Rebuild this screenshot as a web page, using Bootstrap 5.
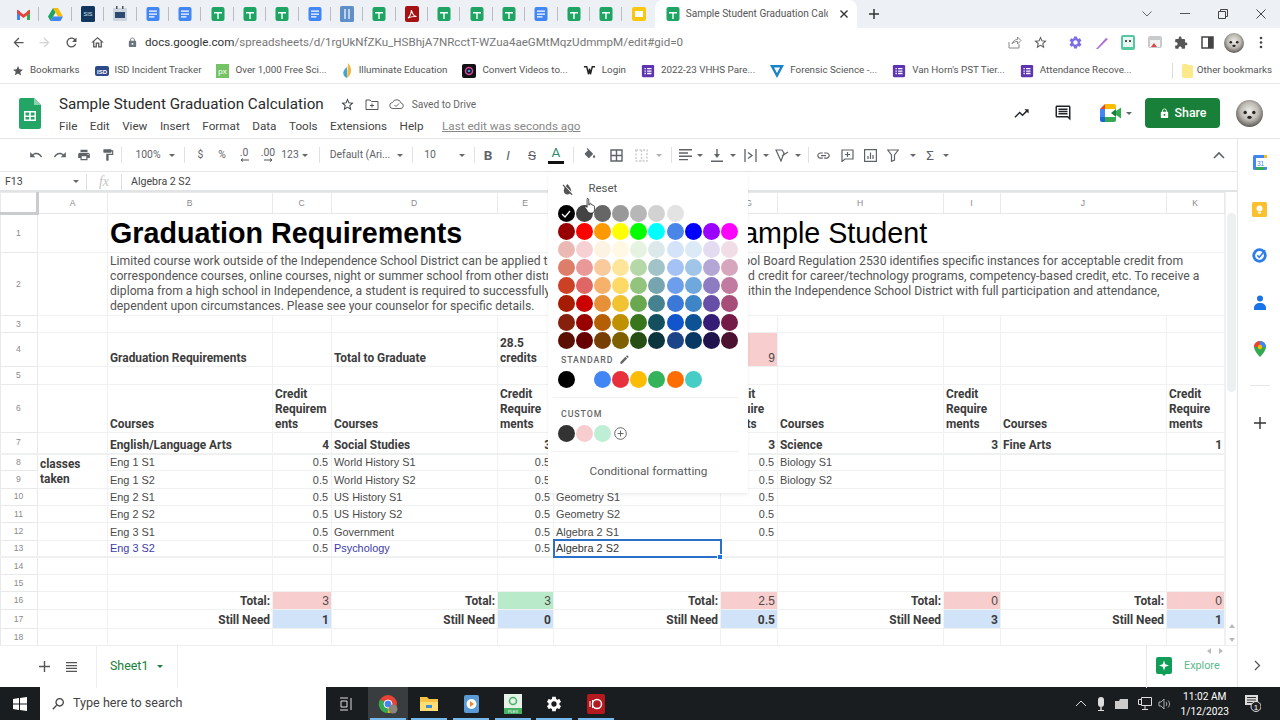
<!DOCTYPE html>
<html lang="en">
<head>
  <meta charset="UTF-8" />
  <title>Sample Student Graduation Calculation</title>
  <link href="https://cdn.jsdelivr.net/npm/bootstrap@5.3.2/dist/css/bootstrap.min.css" rel="stylesheet" />
  <style>
    html, body { width: 1280px; height: 720px; overflow: hidden; }
    body { font-family: Roboto, "Liberation Sans", sans-serif; color: #3c4043; background: #fff; }
    .app { width: 1280px; height: 720px; }
    svg { display: block; flex-shrink: 0; }
    .ic { fill: currentColor; }
    .ml10 { margin-left: 10px; }

    /* chrome */
    .tabstrip { height: 28px; background: #edf1f5; padding-left: 7px; }
    .fav { width: 32.4px; height: 28px; position: relative; }
    .fav::after { content: ""; position: absolute; right: 0; top: 7px; height: 14px; width: 1px; background: #b9bdc1; }
    .fav.last::after { display: none; }
    .tabon { width: 202px; height: 28px; background: #fff; border-radius: 8px 8px 0 0; padding: 0 8px 0 10px; font-size: 10.1px; color: #555; }
    .tabon .tname { width: 142px; margin-left: 5px; overflow: hidden; white-space: nowrap; }
    .tabplus { margin-left: 11px; }
    .winbtn { width: 38px; height: 28px; color: #444; }
    .addr { height: 30px; padding-left: 5px; }
    .i26 { width: 26.5px; height: 26px; color: #555; }
    .addr-end { padding-right: 6px; }
    .url { font-size: 11.6px; color: #777; margin-left: 7px; white-space: nowrap; }
    .url b { font-weight: 400; color: #333; }
    .marks { height: 27px; font-size: 9.8px; color: #555; padding-left: 12px; border-bottom: 1px solid #e6e8ea; white-space: nowrap; }
    .bmk { gap: 6px; margin-right: 15px; }
    .marksep { width: 1px; height: 16px; background: #ddd; margin-right: 9px; }

    /* docs header */
    .dochead { height: 55px; border-bottom: 1px solid #e4e6e8; padding-left: 19px; padding-top: 4px; }
    .docmain { margin-left: 18px; margin-top: 4px; }
    .doctitle { font-size: 15.2px; color: #2b2b2b; line-height: 20px; white-space: nowrap; }
    .saved { font-size: 10.2px; color: #666; }
    .menus { font-size: 11.7px; color: #444; gap: 12.5px; margin-top: 4px; white-space: nowrap; }
    .lastedit { color: #888; text-decoration: underline; margin-left: 6px; }
    .meet { margin-left: 28px; }
    .sharebtn { width: 75px; height: 30px; background: #188038; color: #fff; border-radius: 4px; font-size: 12.4px; font-weight: 500; gap: 5px; margin-left: 13px; }
    .dog-lg { margin-left: 16px; margin-right: 17px; }

    /* toolbar */
    .toolbar { height: 33px; padding-left: 24px; border-bottom: 1px solid #e4e6e8; font-size: 10.4px; color: #666; white-space: nowrap; }
    .tb { height: 32px; flex-shrink: 0; color: #5f6368; }
    .tb-sep { position: relative; }
    .tb-sep::after { content: ""; position: absolute; left: 50%; top: 8px; height: 16px; width: 1px; background: #e0e2e4; }
    .t2 { width: 2px; } .t8 { width: 8px; } .t10 { width: 10px; } .t12 { width: 12px; } .t13 { width: 13px; } .t14 { width: 14px; } .t16 { width: 16px; }
    .t18 { width: 18px; } .t19 { width: 19px; } .t21 { width: 21px; } .t22 { width: 22px; } .t24 { width: 24px; }
    .t26 { width: 26px; } .t28 { width: 28px; } .t30 { width: 30px; } .t44 { width: 44px; } .t66 { width: 66px; }
    .tfont { font-size: 13.5px; }
    .tcolor { font-size: 13.5px; line-height: 1; color: #2e8b6d; }
    .caret { width: 0; height: 0; border-left: 3px solid transparent; border-right: 3px solid transparent; border-top: 3.5px solid #666; }
    .abar { width: 16px; height: 3px; background: #111; margin-top: 1px; }
    .decimals { line-height: 10px; }
    .tbup { margin-right: 12px; }
    .formula { height: 20px; font-size: 10.6px; color: #444; border-bottom: 2px solid #e2e3e4; padding-top: 1px; }
    .cellref { width: 82px; padding-left: 5px; padding-right: 3px; }
    .fx { width: 36px; font-family: "Liberation Serif", serif; font-style: italic; font-size: 14px; color: #c4c4c4; text-align: center; border-left: 1px solid #e0e0e0; border-right: 1px solid #e0e0e0; margin-left: 4px; margin-right: 9px; line-height: 16px; }

    /* sheet grid */
    .gridwrap { height: 453px; position: relative; overflow: hidden; }
    .sheetgrid { table-layout: fixed; width: 1224px; border-collapse: collapse; font-family: "Liberation Sans", sans-serif; font-size: 10.9px; color: #4a4a4a; }
    .sheetgrid td, .sheetgrid th { border: 1px solid #f0f1f1; padding: 0 3px 0 2px; line-height: 15px; vertical-align: bottom; overflow: hidden; white-space: nowrap; }
    .sheetgrid th { font-weight: 400; font-size: 8.6px; color: #8a8a8a; text-align: center; vertical-align: middle; background: #fff; border-color: #e8e9e9; }
    .sheetgrid td.lab { font-family: Roboto, sans-serif; font-weight: 700; font-size: 11.9px; color: #3c3c3c; }
    .sheetgrid td.lab.num { padding-right: 2px; }
    .sheetgrid td.num { text-align: right; }
    .sheetgrid td.blue { color: #3c3ca8; }
    .sheetgrid td.sum { background: #f8cdcd; text-align: right; font-size: 12px; padding-right: 2px; }
    .sheetgrid td.ok { background: #b9eaca; text-align: right; font-size: 12px; padding-right: 2px; }
    .sheetgrid td.need { background: #d0e3f9; text-align: right; font-family: Roboto, sans-serif; font-weight: 700; font-size: 12px; color: #3c3c3c; padding-right: 2px; }
    .sheetgrid th.corner { border-right: 3px solid #c9cbcd; border-bottom: 3px solid #c9cbcd; }
    .sheetgrid tr.thick td, .sheetgrid tr.thick th { border-bottom: 2px solid #eff0f0; }
    .r19 { height: 21px; } .r39 { height: 39px; } .r64 { height: 63px; } .r17 { height: 17.3px; } .r35 { height: 34px; } .r50 { height: 48px; } .r20 { height: 21.5px; } .r21 { height: 19.5px; }
    .sheetgrid td.bigt { font-size: 28.7px; line-height: 32px; color: #000; vertical-align: middle; }
    .sheetgrid td.fine { font-family: Roboto, sans-serif; font-size: 12.2px; line-height: 15px; color: #555; vertical-align: top; padding-top: 1px; }
    .ind3 { margin-left: 25px; }
    .sheetgrid td.taken { vertical-align: top; padding-top: 2px; }
    .sheetgrid td.sel { outline: 2px solid #2a70c8; outline-offset: -1px; color: #333; }
    .handle { position: absolute; left: 717px; top: 362px; width: 6px; height: 6px; background: #1a73e8; border: 1px solid #fff; }
    .vtrack { width: 12px; height: 453px; border-left: 1px solid #f0f0f0; position: relative; }
    .vthumb { position: absolute; left: 1px; top: 21px; width: 9px; height: 179px; background: #edeff1; border-radius: 5px; }
    .vstep { position: absolute; left: 3px; width: 0; height: 0; border-left: 3px solid transparent; border-right: 3px solid transparent; }
    .vstep.up { top: 432px; border-bottom: 4px solid #bbb; }
    .vstep.dn { top: 446px; border-top: 4px solid #bbb; }

    /* bottom */
    .sheetbar { height: 42px; border-top: 1px solid #edeeef; background: #fff; position: relative; }
    .sheetadd { width: 96px; color: #666; padding-left: 39px; gap: 8px; }
    .sheettab { width: 82px; height: 42px; border-left: 1px solid #eee; border-right: 1px solid #eee; color: #188038; font-size: 12.4px; padding-left: 13px; gap: 9px; }
    .sheettab .caret { border-top-color: #188038; }
    .explore { width: 91px; height: 42px; border-left: 1px solid #e8e8e8; font-size: 10.8px; color: #5ab98a; padding-left: 9px; gap: 12px; margin-left: auto; }
    .hsteps { position: absolute; right: 14px; top: 2px; gap: 8px; }
    .sidepanel { width: 44px; border-left: 1px solid #e4e6e8; flex-shrink: 0; }
    .sideslot { height: 46.7px; }
    .sidediv { width: 20px; height: 1px; background: #e4e6e8; margin-top: 13px; margin-bottom: 13px; }
    .sidechev { margin-top: auto; margin-bottom: 16px; margin-right: 4px; }
    .taskbar { height: 33px; background: #1a1d20; color: #fff; font-size: 10.2px; }
    .winstart { width: 40px; }
    .searchbox { width: 286px; height: 33px; background: #fff; color: #444; font-size: 12.6px; gap: 7px; padding-left: 10px; }
    .tk { width: 40px; height: 33px; position: relative; margin-right: 1.7px; }
    .tk.on { background: #3a3d40; }
    .tk.run::after { content: ""; position: absolute; left: 2px; right: 2px; bottom: 0; height: 2px; background: #76b9ed; }
    .clock { line-height: 15px; text-align: center; font-size: 10.2px; margin-left: 10px; margin-right: 16px; white-space: nowrap; }
    .tray { gap: 6px; }
    .notif { margin-right: 19px; }

    /* colour popup */
    .colormenu { position: absolute; left: 548px; top: 172px; width: 200px; height: 321px; background: #fff; box-shadow: 0 2px 3px rgba(0,0,0,.07); padding: 7px 0 0 9.5px; color: #555; }
    .reset { height: 20px; font-size: 11.4px; gap: 14px; padding-left: 2px; margin-bottom: 6px; }
    .swatches { display: grid; grid-template-columns: repeat(10, 18.2px); grid-auto-rows: 18.1px; }
    .dot { width: 17px; height: 17px; border-radius: 50%; }
    .dotcheck { color: #fff; }
    .cap { font-size: 8.8px; letter-spacing: .9px; color: #666; font-weight: 500; line-height: 12px; gap: 6px; padding-left: 3.5px; }
    .cap-std { margin-top: 4px; margin-bottom: 5px; }
    .cap-cus { margin-top: 10px; margin-bottom: 5px; }
    .menurule { height: 1px; background: #f1f1f1; width: 186px; margin-left: -5px; }
    .cfmt { font-size: 11.8px; text-align: center; width: 182px; margin-top: 11px; color: #5c5c5c; }
    .handcur { position: absolute; left: 584px; top: 197px; }
  </style>
</head>
<body>
<svg width="0" height="0" class="position-absolute">
  <defs>
    <radialGradient id="dogfur" cx="50%" cy="42%" r="60%"><stop offset="0" stop-color="#efeee9"/><stop offset=".55" stop-color="#bdbab3"/><stop offset="1" stop-color="#55524e"/></radialGradient>
  </defs>
  <symbol id="s-dog" viewBox="0 0 28 28"><circle cx="14" cy="14" r="14" fill="url(#dogfur)"/><circle cx="9.500" cy="13" r="1.800" fill="#2a2522"/><circle cx="18.500" cy="13" r="1.800" fill="#2a2522"/><ellipse cx="14" cy="18" rx="2.300" ry="1.700" fill="#2a2522"/></symbol>
  <symbol id="s-sheet" viewBox="0 0 16 16"><rect x="1.5" y="1" width="13" height="14" rx="2" fill="#1fa463"/><path d="M4 6h8v1.4H8.7V13H7.3V7.4H4z" fill="#fff"/></symbol>
  <symbol id="s-doc" viewBox="0 0 16 16"><rect x="1.5" y="1" width="13" height="14" rx="2" fill="#4285f4"/><path d="M4 4.5h8v1.3H4zM4 7.4h8v1.3H4zM4 10.3h5.5v1.3H4z" fill="#fff"/></symbol>
  <symbol id="s-form" viewBox="0 0 16 16"><rect x="1" y="1" width="14" height="14" rx="1.5" fill="#5e35b1"/><path d="M4 4.5h1.5V6H4zM7 4.5h5V6H7zM4 7.3h1.5v1.5H4zM7 7.3h5v1.5H7zM4 10.1h1.5v1.5H4zM7 10.1h5v1.5H7z" fill="#fff"/></symbol>
  <symbol id="m-undo" viewBox="0 0 24 24"><path d="M12.5 8c-2.65 0-5.05.99-6.9 2.6L2 7v9h9l-3.62-3.62c1.39-1.16 3.16-1.88 5.12-1.88 3.54 0 6.55 2.31 7.6 5.5l2.37-.78C21.08 11.03 17.15 8 12.5 8z"/></symbol>
  <symbol id="m-redo" viewBox="0 0 24 24"><path d="M18.4 10.6C16.55 8.99 14.15 8 11.5 8c-4.65 0-8.58 3.03-9.96 7.22L3.9 16c1.05-3.19 4.05-5.5 7.6-5.5 1.95 0 3.73.72 5.12 1.88L13 16h9V7l-3.6 3.6z"/></symbol>
  <symbol id="m-print" viewBox="0 0 24 24"><path d="M19 8H5c-1.66 0-3 1.34-3 3v6h4v4h12v-4h4v-6c0-1.66-1.34-3-3-3zm-3 11H8v-5h8v5zm3-7c-.55 0-1-.45-1-1s.45-1 1-1 1 .45 1 1-.45 1-1 1zm-1-9H6v4h12V3z"/></symbol>
  <symbol id="m-paint" viewBox="0 0 24 24"><path d="M18 4V3c0-.55-.45-1-1-1H5c-.55 0-1 .45-1 1v4c0 .55.45 1 1 1h12c.55 0 1-.45 1-1V6h1v4H9v11c0 .55.45 1 1 1h2c.55 0 1-.45 1-1v-9h8V4h-3z"/></symbol>
  <symbol id="m-star" viewBox="0 0 24 24"><path d="M22 9.24l-7.19-.62L12 2 9.19 8.63 2 9.24l5.46 4.73L5.82 21 12 17.27 18.18 21l-1.63-7.03L22 9.24zM12 15.4l-3.76 2.27 1-4.28-3.32-2.88 4.38-.38L12 6.1l1.71 4.04 4.38.38-3.32 2.88 1 4.28L12 15.4z"/></symbol>
  <symbol id="m-comment" viewBox="0 0 24 24"><path d="M21.99 4c0-1.1-.89-2-1.99-2H4c-1.1 0-2 .9-2 2v12c0 1.1.9 2 2 2h14l4 4-.01-18zM20 4v13.17L18.83 16H4V4h16zM6 12h12v2H6zm0-3h12v2H6zm0-3h12v2H6z"/></symbol>
  <symbol id="m-lock" viewBox="0 0 24 24"><path d="M18 8h-1V6c0-2.76-2.24-5-5-5S7 3.24 7 6v2H6c-1.1 0-2 .9-2 2v10c0 1.1.9 2 2 2h12c1.1 0 2-.9 2-2V10c0-1.1-.9-2-2-2zm-6 9c-1.1 0-2-.9-2-2s.9-2 2-2 2 .9 2 2-.9 2-2 2zm3.1-9H8.9V6c0-1.71 1.39-3.1 3.1-3.1 1.71 0 3.1 1.39 3.1 3.1v2z"/></symbol>
  <symbol id="m-gear" viewBox="0 0 24 24"><path d="M19.14 12.94c.04-.3.06-.61.06-.94 0-.32-.02-.64-.07-.94l2.03-1.58c.18-.14.23-.41.12-.61l-1.92-3.32c-.12-.22-.37-.29-.59-.22l-2.39.96c-.5-.38-1.03-.7-1.62-.94l-.36-2.54c-.04-.24-.24-.41-.48-.41h-3.84c-.24 0-.43.17-.47.41l-.36 2.54c-.59.24-1.13.57-1.62.94l-2.39-.96c-.22-.08-.47 0-.59.22L2.74 8.87c-.12.21-.08.47.12.61l2.03 1.58c-.05.3-.09.63-.09.94s.02.64.07.94l-2.03 1.58c-.18.14-.23.41-.12.61l1.92 3.32c.12.22.37.29.59.22l2.39-.96c.5.38 1.03.7 1.62.94l.36 2.54c.05.24.24.41.48.41h3.84c.24 0 .44-.17.47-.41l.36-2.54c.59-.24 1.13-.56 1.62-.94l2.39.96c.22.08.47 0 .59-.22l1.92-3.32c.12-.22.07-.47-.12-.61l-2.01-1.58zM12 15.6c-1.98 0-3.6-1.62-3.6-3.6s1.62-3.6 3.6-3.6 3.6 1.62 3.6 3.6-1.62 3.6-3.6 3.6z"/></symbol>
</svg>

<div class="app position-relative d-flex flex-column">

  <!-- tab strip -->
  <div class="tabstrip d-flex align-items-center">
    <div class="fav d-flex align-items-center justify-content-center"><svg width="15" height="12" viewBox="0 0 15 12"><path d="M1 12V2l3 1v9z" fill="#4285f4"/><path d="M14 12V2l-3 1v9z" fill="#34a853"/><path d="M1 1.500l6.500 5 6.500-5V5L7.500 10 1 5z" fill="#ea4335"/></svg></div>
    <div class="fav d-flex align-items-center justify-content-center"><svg width="15" height="13" viewBox="0 0 15 13"><path d="M5 0h5l5 8.500h-5z" fill="#fbbc04"/><path d="M5 0L0 8.500 2.500 13l5-8.500z" fill="#1fa463"/><path d="M2.500 13h10l2.500-4.500H5z" fill="#4285f4"/></svg></div>
    <div class="fav d-flex align-items-center justify-content-center"><svg width="14" height="16" viewBox="0 0 14 16"><rect width="14" height="16" rx="1.500" fill="#12365e"/><text x="7" y="10" font-size="5.500" fill="#dfe6ee" text-anchor="middle" font-family="Liberation Sans">SIS</text></svg></div>
    <div class="fav d-flex align-items-center justify-content-center"><svg width="14" height="16" viewBox="0 0 14 16"><rect y="2" width="14" height="13" rx="1" fill="#cdd5df"/><rect x="2" y="6" width="10" height="6" fill="#2f4a72"/><rect x="3" width="1.500" height="3" fill="#555"/><rect x="9" width="1.500" height="3" fill="#555"/></svg></div>
    <div class="fav d-flex align-items-center justify-content-center"><svg width="16" height="16"><use href="#s-doc"/></svg></div>
    <div class="fav d-flex align-items-center justify-content-center"><svg width="16" height="16"><use href="#s-doc"/></svg></div>
    <div class="fav d-flex align-items-center justify-content-center"><svg width="16" height="16"><use href="#s-sheet"/></svg></div>
    <div class="fav d-flex align-items-center justify-content-center"><svg width="16" height="16"><use href="#s-sheet"/></svg></div>
    <div class="fav d-flex align-items-center justify-content-center"><svg width="16" height="16"><use href="#s-sheet"/></svg></div>
    <div class="fav d-flex align-items-center justify-content-center"><svg width="16" height="16"><use href="#s-doc"/></svg></div>
    <div class="fav d-flex align-items-center justify-content-center"><svg width="14" height="16" viewBox="0 0 14 16"><rect width="14" height="16" rx="1.500" fill="#5f8fc9"/><path d="M5 3v10M9 3v10" stroke="#fff" stroke-width="1.200"/></svg></div>
    <div class="fav d-flex align-items-center justify-content-center"><svg width="16" height="16"><use href="#s-sheet"/></svg></div>
    <div class="fav d-flex align-items-center justify-content-center"><svg width="14" height="16" viewBox="0 0 14 16"><rect width="14" height="16" rx="2" fill="#a61212"/><path d="M3 12c2-1.500 3-4 3.500-8 .6 3.500 2 6 5 6.500-3-.2-6 .2-8.500 1.500z" fill="none" stroke="#fff" stroke-width="1.100"/></svg></div>
    <div class="fav d-flex align-items-center justify-content-center"><svg width="16" height="16"><use href="#s-sheet"/></svg></div>
    <div class="fav d-flex align-items-center justify-content-center"><svg width="16" height="16"><use href="#s-sheet"/></svg></div>
    <div class="fav d-flex align-items-center justify-content-center"><svg width="16" height="16"><use href="#s-sheet"/></svg></div>
    <div class="fav d-flex align-items-center justify-content-center"><svg width="16" height="16"><use href="#s-doc"/></svg></div>
    <div class="fav d-flex align-items-center justify-content-center"><svg width="16" height="16"><use href="#s-sheet"/></svg></div>
    <div class="fav d-flex align-items-center justify-content-center"><svg width="16" height="16"><use href="#s-sheet"/></svg></div>
    <div class="fav last d-flex align-items-center justify-content-center"><svg width="14" height="14" viewBox="0 0 14 14"><rect width="14" height="14" rx="2" fill="#f9c80e"/><rect x="3" y="4" width="8" height="6" fill="#fff"/></svg></div>
    <div class="tabon d-flex align-items-center flex-shrink-0">
      <svg width="16" height="16"><use href="#s-sheet"/></svg>
      <span class="tname">Sample Student Graduation Calc</span>
      <svg class="ms-auto" width="10" height="10" viewBox="0 0 10 10"><path d="M1.500 1.500l7 7M8.500 1.500l-7 7" stroke="#333" stroke-width="1.400"/></svg>
    </div>
    <svg class="tabplus" width="12" height="12" viewBox="0 0 12 12"><path d="M6 1v10M1 6h10" stroke="#333" stroke-width="1.500"/></svg>
    <div class="d-flex ms-auto">
      <div class="winbtn d-flex align-items-center justify-content-center"><svg width="10" height="6" viewBox="0 0 10 6"><path d="M.5.500L5 5 9.500.500" fill="none" stroke="#666"/></svg></div>
      <div class="winbtn d-flex align-items-center justify-content-center"><svg width="10" height="2"><rect width="10" height="1" fill="#555"/></svg></div>
      <div class="winbtn d-flex align-items-center justify-content-center"><svg width="10" height="10" viewBox="0 0 10 10"><path d="M.5 2.500h7v7h-7zM2.500 2.500v-2h7v7h-2" fill="none" stroke="#444"/></svg></div>
      <div class="winbtn d-flex align-items-center justify-content-center"><svg width="10" height="10" viewBox="0 0 10 10"><path d="M.5.500l9 9M9.500.500l-9 9" stroke="#444"/></svg></div>
    </div>
  </div>

  <!-- address bar -->
  <div class="addr d-flex align-items-center">
    <div class="i26 d-flex align-items-center justify-content-center"><svg class="ic" width="15" height="15" viewBox="0 0 24 24"><path d="M20 11H7.830l5.590-5.590L12 4l-8 8 8 8 1.410-1.410L7.830 13H20v-2z"/></svg></div>
    <div class="i26 d-flex align-items-center justify-content-center opacity-25"><svg class="ic" width="15" height="15" viewBox="0 0 24 24"><path d="M12 4l-1.410 1.410L16.170 11H4v2h12.170l-5.580 5.590L12 20l8-8z"/></svg></div>
    <div class="i26 d-flex align-items-center justify-content-center"><svg class="ic" width="15" height="15" viewBox="0 0 24 24"><path d="M17.650 6.350C16.200 4.900 14.210 4 12 4c-4.420 0-7.990 3.580-7.990 8s3.570 8 7.990 8c3.730 0 6.840-2.550 7.730-6h-2.080c-.82 2.330-3.040 4-5.650 4-3.310 0-6-2.690-6-6s2.690-6 6-6c1.660 0 3.140.69 4.220 1.780L13 11h7V4l-2.350 2.350z"/></svg></div>
    <div class="i26 d-flex align-items-center justify-content-center"><svg class="ic" width="15" height="15" viewBox="0 0 24 24"><path d="M12 5.690l5 4.500V18h-2v-6H9v6H7v-7.810l5-4.500M12 3L2 12h3v8h6v-6h2v6h6v-8h3L12 3z"/></svg></div>
    <svg class="ic ms-3 text-secondary" width="11" height="11" viewBox="0 0 24 24"><use href="#m-lock"/></svg>
    <div class="url"><b>docs.google.com</b>/spreadsheets/d/1rgUkNfZKu_HSBhjA7NRcctT-WZua4aeGMtMqzUdmmpM/edit#gid=0</div>
    <div class="addr-end d-flex align-items-center ms-auto">
      <div class="i26 d-flex align-items-center justify-content-center"><svg width="15" height="15" viewBox="0 0 15 15" fill="none" stroke="#888"><path d="M2 7v6h10V9M5 9c1-3 3-4.500 5.500-4.500V2L14 5.500 10.500 9V6.500C8 6.500 6 7.500 5 9z"/></svg></div>
      <div class="i26 d-flex align-items-center justify-content-center"><svg class="ic" width="15" height="15" viewBox="0 0 24 24"><use href="#m-star"/></svg></div>
      <div class="i26 d-flex align-items-center justify-content-center ms-2"><svg width="15" height="15" viewBox="0 0 24 24" fill="#7c6ee6"><use href="#m-gear"/></svg></div>
      <div class="i26 d-flex align-items-center justify-content-center"><svg width="14" height="14" viewBox="0 0 14 14"><path d="M1 13L11 2l2 1L3 13z" fill="#b06ad6"/></svg></div>
      <div class="i26 d-flex align-items-center justify-content-center"><svg width="14" height="15" viewBox="0 0 14 15"><rect width="14" height="15" rx="2" fill="#56c8a0"/><rect x="2" y="2" width="10" height="10" fill="#e9f8f2"/><circle cx="5" cy="6" r="1" fill="#222"/><circle cx="9" cy="6" r="1" fill="#222"/></svg></div>
      <div class="i26 d-flex align-items-center justify-content-center"><svg width="14" height="14" viewBox="0 0 14 14"><rect width="14" height="12" rx="2" fill="#c9cacc"/><rect x="2" y="4" width="10" height="7" fill="#f2f2f2"/><path d="M3 11l3-4 3 4z" fill="#d44"/></svg></div>
      <div class="i26 d-flex align-items-center justify-content-center"><svg class="ic" width="14" height="14" viewBox="0 0 24 24"><path d="M20.500 11H19V7c0-1.100-.9-2-2-2h-4V3.500C13 2.120 11.880 1 10.500 1S8 2.120 8 3.500V5H4c-1.100 0-1.990.9-1.990 2v3.800H3.500c1.490 0 2.700 1.210 2.700 2.700s-1.210 2.700-2.700 2.700H2V20c0 1.100.9 2 2 2h3.800v-1.500c0-1.490 1.210-2.700 2.700-2.700 1.490 0 2.700 1.210 2.700 2.700V22H17c1.100 0 2-.9 2-2v-4h1.500c1.380 0 2.500-1.120 2.500-2.500S21.880 11 20.500 11z"/></svg></div>
      <div class="i26 d-flex align-items-center justify-content-center"><svg width="13" height="13" viewBox="0 0 13 13"><path d="M1 1h11v11H1z" fill="none" stroke="#444" stroke-width="1.500"/><rect x="7" y="1" width="5" height="11" fill="#444"/></svg></div>
      <div class="i26 d-flex align-items-center justify-content-center"><svg width="20" height="20"><use href="#s-dog"/></svg></div>
      <div class="i26 d-flex align-items-center justify-content-center"><svg width="4" height="13" viewBox="0 0 4 13" fill="#444"><circle cx="2" cy="2" r="1.300"/><circle cx="2" cy="6.500" r="1.300"/><circle cx="2" cy="11" r="1.300"/></svg></div>
    </div>
  </div>

  <!-- bookmarks -->
  <div class="marks d-flex align-items-center">
    <div class="bmk d-flex align-items-center"><svg class="ic" width="12" height="12" viewBox="0 0 24 24"><path d="M12 2l2.900 6.600 7.100.7-5.400 4.700 1.600 7L12 17l-6.200 3.500 1.600-7L2 9.300l7.100-.7z"/></svg>Bookmarks</div>
    <div class="bmk d-flex align-items-center"><svg width="14" height="10" viewBox="0 0 14 10"><rect width="14" height="10" rx="2" fill="#2f4a8a"/><text x="7" y="7.500" font-size="6" fill="#fff" text-anchor="middle" font-family="Liberation Sans" font-weight="700">ISD</text></svg>ISD Incident Tracker</div>
    <div class="bmk d-flex align-items-center"><svg width="13" height="14" viewBox="0 0 13 14"><rect width="13" height="14" fill="#74c365"/><text x="6.500" y="10" font-size="8" fill="#fff" text-anchor="middle" font-family="Liberation Sans">px</text></svg>Over 1,000 Free Sci...</div>
    <div class="bmk d-flex align-items-center"><svg width="11" height="15" viewBox="0 0 11 15"><path d="M6 0C9 4 10 7 8 12L5 15z" fill="#f4b63f"/><path d="M5 4C1 7 0 11 3 14l2 1z" fill="#42a5d9"/></svg>Illuminate Education</div>
    <div class="bmk d-flex align-items-center"><svg width="14" height="14" viewBox="0 0 14 14"><rect width="14" height="14" rx="2" fill="#111"/><circle cx="7" cy="7" r="3.500" fill="none" stroke="#d547a8" stroke-width="1.500"/><circle cx="7" cy="7" r="1.300" fill="#35a7e0"/></svg>Convert Videos to...</div>
    <div class="bmk d-flex align-items-center"><svg width="13" height="13" viewBox="0 0 14 14" fill="none" stroke="#222" stroke-width="1.500"><path d="M1 3h3l2 8 1-6 1 6 2-8h3"/></svg>Login</div>
    <div class="bmk d-flex align-items-center"><svg width="14" height="14"><use href="#s-form"/></svg>2022-23 VHHS Pare...</div>
    <div class="bmk d-flex align-items-center"><svg width="14" height="14" viewBox="0 0 14 14"><path d="M0 1h14L7 14z" fill="#1b84c7"/><path d="M4 3.500h6L7 9z" fill="#fff"/></svg>Forensic Science -...</div>
    <div class="bmk d-flex align-items-center"><svg width="14" height="14"><use href="#s-form"/></svg>Van Horn's PST Tier...</div>
    <div class="bmk d-flex align-items-center"><svg width="14" height="14"><use href="#s-form"/></svg>Attendance Recove...</div>
    <div class="marksep ms-auto"></div>
    <div class="d-flex align-items-center gap-1 pe-2"><svg width="11" height="14" viewBox="0 0 11 14"><path d="M0 2a2 2 0 012-2h3l1 1h3a2 2 0 012 2v9a2 2 0 01-2 2H2a2 2 0 01-2-2z" fill="#fbe98a"/></svg>Other bookmarks</div>
  </div>

  <!-- document header -->
  <div class="dochead d-flex align-items-center">
    <svg width="22" height="31" viewBox="0 0 22 31"><path d="M2 0h13l7 7v22a2 2 0 01-2 2H2a2 2 0 01-2-2V2a2 2 0 012-2z" fill="#23a566"/><path d="M15 0l7 7h-7z" fill="#8ed1b1"/><path d="M5 13h12v10H5zM6.500 14.500v3h3.700v-3zm5.300 0v3h3.700v-3zm-5.300 4.600v2.400h3.700v-2.400zm5.300 0v2.400h3.700v-2.400z" fill="#fff" fill-rule="evenodd"/></svg>
    <div class="docmain">
      <div class="d-flex align-items-center">
        <span class="doctitle">Sample Student Graduation Calculation</span>
        <svg class="ic ms-3" width="15" height="15" viewBox="0 0 24 24"><use href="#m-star"/></svg>
        <svg class="ml10" width="14" height="13" viewBox="0 0 14 13" fill="none" stroke="#555"><path d="M1 2h4l1.500 1.500H13v8H1zM7 5.500v4M5 7.500h4"/></svg>
        <svg class="ml10" width="15" height="12" viewBox="0 0 15 12" fill="none" stroke="#666"><path d="M4 10.500a3 3 0 01-.5-6A4.500 4.500 0 0112 5a2.800 2.800 0 010 5.500zM5.500 7l1.500 1.500L10 5.500"/></svg>
        <span class="saved ms-2">Saved to Drive</span>
      </div>
      <div class="menus d-flex">
        <span>File</span><span>Edit</span><span>View</span><span>Insert</span><span>Format</span><span>Data</span><span>Tools</span><span>Extensions</span><span>Help</span>
        <span class="lastedit">Last edit was seconds ago</span>
      </div>
    </div>
    <div class="d-flex align-items-center ms-auto">
      <svg class="ic text-dark" width="17" height="17" viewBox="0 0 24 24"><path d="M16 6l2.290 2.290-4.880 4.880-4-4L2 16.590 3.410 18l6-6 4 4 6.300-6.290L22 12V6z"/></svg>
      <svg class="ic text-dark ms-4" width="18" height="18" viewBox="0 0 24 24"><use href="#m-comment"/></svg>
      <svg class="meet" width="22" height="18" viewBox="0 0 22 18"><path d="M0 5l5-5v5z" fill="#ea4335"/><path d="M0 5h5v8H0z" fill="#4285f4"/><path d="M0 13h5v5H2a2 2 0 01-2-2z" fill="#1967d2"/><path d="M5 0h9a2 2 0 012 2v3H5z" fill="#fbbc04"/><path d="M5 13h11v3a2 2 0 01-2 2H5z" fill="#34a853"/><path d="M11 9l5-4v8z" fill="#188038"/><path d="M16 7l5-3.500v11L16 11z" fill="#34a853"/></svg>
      <div class="caret ms-1"></div>
      <div class="sharebtn d-flex align-items-center justify-content-center">
        <svg class="ic" width="11" height="11" viewBox="0 0 24 24"><use href="#m-lock"/></svg>Share
      </div>
      <svg class="dog-lg" width="27" height="27"><use href="#s-dog"/></svg>
    </div>
  </div>

  <div class="d-flex flex-grow-1">
    <div class="flex-grow-1 d-flex flex-column">

      <!-- toolbar -->
      <div class="toolbar d-flex align-items-center">
        <div class="tb t24 d-flex align-items-center justify-content-center"><svg class="ic" width="14" height="14"><use href="#m-undo"/></svg></div>
        <div class="tb t24 d-flex align-items-center justify-content-center"><svg class="ic" width="14" height="14"><use href="#m-redo"/></svg></div>
        <div class="tb t24 d-flex align-items-center justify-content-center"><svg class="ic" width="14" height="14"><use href="#m-print"/></svg></div>
        <div class="tb t24 d-flex align-items-center justify-content-center"><svg class="ic" width="14" height="14"><use href="#m-paint"/></svg></div>
        <div class="tb tb-sep t2"></div>
        <div class="tb t44 d-flex align-items-center justify-content-center ps-2">100%</div>
        <div class="tb t12 d-flex align-items-center justify-content-center"><div class="caret"></div></div>
        <div class="tb tb-sep t12"></div>
        <div class="tb t21 d-flex align-items-center justify-content-center">$</div>
        <div class="tb t22 d-flex align-items-center justify-content-center">%</div>
        <div class="tb t22 d-flex flex-column align-items-center justify-content-center decimals">.0<svg width="9" height="4" viewBox="0 0 9 4" fill="none" stroke="#555"><path d="M9 2H1M3 .5L1 2l2 1.500"/></svg></div>
        <div class="tb t26 d-flex flex-column align-items-center justify-content-center decimals">.00<svg width="9" height="4" viewBox="0 0 9 4" fill="none" stroke="#555"><path d="M0 2h8M6 .5L8 2 6 3.500"/></svg></div>
        <div class="tb t18 d-flex align-items-center justify-content-center">123</div>
        <div class="tb t12 d-flex align-items-center justify-content-center"><div class="caret"></div></div>
        <div class="tb tb-sep t16"></div>
        <div class="tb t66 d-flex align-items-center justify-content-center">Default (Ari...</div>
        <div class="tb t14 d-flex align-items-center justify-content-center"><div class="caret"></div></div>
        <div class="tb tb-sep t10"></div>
        <div class="tb t26 d-flex align-items-center justify-content-center">10</div>
        <div class="tb t13"></div>
        <div class="tb t12 d-flex align-items-center justify-content-center"><div class="caret"></div></div>
        <div class="tb tb-sep t12"></div>
        <div class="tb t16 d-flex align-items-center justify-content-center fw-bold tfont">B</div>
        <div class="tb t24 d-flex align-items-center justify-content-center fst-italic tfont">I</div>
        <div class="tb t24 d-flex align-items-center justify-content-center text-decoration-line-through tfont">S</div>
        <div class="tb t24 d-flex flex-column align-items-center justify-content-center"><span class="tcolor">A</span><div class="abar"></div></div>
        <div class="tb tb-sep t10"></div>
        <div class="tb t24 d-flex align-items-center justify-content-center"><svg class="ic" width="14" height="14" viewBox="0 0 24 24"><path d="M16.560 8.940L7.620 0 6.210 1.410l2.380 2.380-5.150 5.150c-.59.59-.59 1.540 0 2.120l5.500 5.500c.29.29.68.44 1.060.44s.77-.15 1.060-.44l5.500-5.500c.59-.58.59-1.530 0-2.120zM19 11.500s-2 2.170-2 3.500c0 1.100.9 2 2 2s2-.9 2-2c0-1.330-2-3.500-2-3.500z"/></svg></div>
        <div class="tb t28 d-flex align-items-center justify-content-center"><svg width="13" height="13" viewBox="0 0 13 13" fill="none" stroke="#5f6368" stroke-width="1.400"><path d="M1 1h11v11H1zM6.500 1v11M1 6.500h11"/></svg></div>
        <div class="tb t22 d-flex align-items-center justify-content-center"><svg width="13" height="13" viewBox="0 0 13 13" fill="none" stroke="#c9cbcd" stroke-width="1.400" stroke-dasharray="2 1.500"><path d="M1 1h11v11H1zM6.500 1v11"/></svg></div>
        <div class="tb t14 d-flex align-items-center justify-content-center opacity-50"><div class="caret"></div></div>
        <div class="tb tb-sep t10"></div>
        <div class="tb t18 d-flex align-items-center justify-content-center"><svg width="13" height="12" viewBox="0 0 13 12" fill="#5f6368"><path d="M0 0h13v1.400H0zM0 3.300h9v1.400H0zM0 6.600h13V8H0zM0 9.900h9v1.400H0z"/></svg></div>
        <div class="tb t12 d-flex align-items-center justify-content-center"><div class="caret"></div></div>
        <div class="tb t22 d-flex align-items-center justify-content-center"><svg width="12" height="13" viewBox="0 0 12 13" fill="#5f6368"><path d="M5.300 0h1.400v5H9L6 9 3 5h2.300zM0 11.600h12V13H0z"/></svg></div>
        <div class="tb t10 d-flex align-items-center justify-content-center"><div class="caret"></div></div>
        <div class="tb t24 d-flex align-items-center justify-content-center"><svg width="13" height="13" viewBox="0 0 13 13" fill="none" stroke="#5f6368" stroke-width="1.300"><path d="M1 0v13M12 0v13M4 3.500l4 3-4 3"/></svg></div>
        <div class="tb t8 d-flex align-items-center justify-content-center"><div class="caret"></div></div>
        <div class="tb t24 d-flex align-items-center justify-content-center"><svg width="14" height="13" viewBox="0 0 14 13" fill="none" stroke="#5f6368" stroke-width="1.200"><path d="M1 1h6l2 3-3 8zM7 7l6-4"/></svg></div>
        <div class="tb t8 d-flex align-items-center justify-content-center"><div class="caret"></div></div>
        <div class="tb tb-sep t12"></div>
        <div class="tb t18 d-flex align-items-center justify-content-center"><svg class="ic" width="15" height="15" viewBox="0 0 24 24"><path d="M3.900 12c0-1.710 1.390-3.100 3.100-3.100h4V7H7c-2.760 0-5 2.240-5 5s2.240 5 5 5h4v-1.900H7c-1.710 0-3.100-1.390-3.100-3.100zM8 13h8v-2H8v2zm9-6h-4v1.900h4c1.710 0 3.100 1.390 3.100 3.100s-1.390 3.100-3.100 3.100h-4V17h4c2.760 0 5-2.240 5-5s-2.240-5-5-5z"/></svg></div>
        <div class="tb t30 d-flex align-items-center justify-content-center"><svg width="13" height="13" viewBox="0 0 13 13" fill="none" stroke="#5f6368" stroke-width="1.200"><path d="M1 1h11v9H4l-3 2.500zM6.500 3v5M4 5.500h5"/></svg></div>
        <div class="tb t16 d-flex align-items-center justify-content-center"><svg width="13" height="13" viewBox="0 0 13 13" fill="none" stroke="#5f6368" stroke-width="1.200"><path d="M.6.600h11.800v11.800H.6zM4 10V7M6.500 10V3.500M9 10V6"/></svg></div>
        <div class="tb t30 d-flex align-items-center justify-content-center"><svg width="12" height="13" viewBox="0 0 12 13" fill="none" stroke="#5f6368" stroke-width="1.200"><path d="M.7 1h10.600L7.500 6v5L4.500 12.300V6z"/></svg></div>
        <div class="tb t10 d-flex align-items-center justify-content-center"><div class="caret"></div></div>
        <div class="tb t24 d-flex align-items-center justify-content-center tfont">&Sigma;</div>
        <div class="tb t8 d-flex align-items-center justify-content-center"><div class="caret"></div></div>
        <svg class="ms-auto tbup" width="12" height="8" viewBox="0 0 12 8" fill="none" stroke="#5f6368" stroke-width="1.600"><path d="M1 7l5-5 5 5"/></svg>
      </div>

      <!-- formula bar -->
      <div class="formula d-flex align-items-center">
        <div class="cellref d-flex align-items-center justify-content-between">F13 <div class="caret"></div></div>
        <div class="fx">fx</div>
        <div>Algebra 2 S2</div>
      </div>

      <!-- grid -->
      <div class="d-flex">
        <div class="gridwrap flex-grow-1">
          <table class="sheetgrid">
            <colgroup>
              <col width="37"><col width="70"><col width="165"><col width="59"><col width="166"><col width="56"><col width="167"><col width="57"><col width="166"><col width="57"><col width="166"><col width="58">
            </colgroup>
            <tr class="r19"><th class="corner"></th><th>A</th><th>B</th><th>C</th><th>D</th><th>E</th><th>F</th><th>G</th><th>H</th><th>I</th><th>J</th><th>K</th></tr>
            <tr class="r39"><th>1</th><td></td><td colspan="5" class="bigt fw-bold">Graduation Requirements</td><td colspan="5" class="bigt">Sample Student</td></tr>
            <tr class="r64"><th>2</th><td></td>
              <td colspan="5" class="fine">Limited course work outside of the Independence School District can be applied t<br>correspondence courses, online courses, night or summer school from other distr<br>diploma from a high school in Independence, a student is required to successfully<br>dependent upon circumstances. Please see your counselor for specific details.</td>
              <td colspan="5" class="fine"><div>School Board Regulation 2530 identifies specific instances for acceptable credit from</div><div class="ind3">d credit for career/technology programs, competency-based credit, etc. To receive a</div><div class="ind3">ithin the Independence School District with full participation and attendance,</div></td>
            </tr>
            <tr class="r17"><th>3</th><td></td><td></td><td></td><td></td><td></td><td></td><td></td><td></td><td></td><td></td><td></td></tr>
            <tr class="r35"><th>4</th><td></td><td class="lab">Graduation Requirements</td><td></td><td class="lab">Total to Graduate</td><td class="lab">28.5<br>credits</td><td></td><td class="sum">9</td><td></td><td></td><td></td><td></td></tr>
            <tr class="r17"><th>5</th><td></td><td></td><td></td><td></td><td></td><td></td><td></td><td></td><td></td><td></td><td></td></tr>
            <tr class="r50"><th>6</th><td></td><td class="lab">Courses</td><td class="lab">Credit<br>Requirem<br>ents</td><td class="lab">Courses</td><td class="lab">Credit<br>Require<br>ments</td><td></td><td class="lab">Credit<br>Require<br>ments</td><td class="lab">Courses</td><td class="lab">Credit<br>Require<br>ments</td><td class="lab">Courses</td><td class="lab">Credit<br>Require<br>ments</td></tr>
            <tr class="r20 thick"><th>7</th><td></td><td class="lab">English/Language Arts</td><td class="lab num">4</td><td class="lab">Social Studies</td><td class="lab num">3</td><td></td><td class="lab num">3</td><td class="lab">Science</td><td class="lab num">3</td><td class="lab">Fine Arts</td><td class="lab num">1</td></tr>
            <tr class="r17"><th>8</th><td rowspan="2" class="lab taken">classes<br>taken</td><td>Eng 1 S1</td><td class="num">0.5</td><td>World History S1</td><td class="num">0.5</td><td></td><td class="num">0.5</td><td>Biology S1</td><td></td><td></td><td></td></tr>
            <tr class="r17"><th>9</th><td>Eng 1 S2</td><td class="num">0.5</td><td>World History S2</td><td class="num">0.5</td><td></td><td class="num">0.5</td><td>Biology S2</td><td></td><td></td><td></td></tr>
            <tr class="r17"><th>10</th><td></td><td>Eng 2 S1</td><td class="num">0.5</td><td>US History S1</td><td class="num">0.5</td><td>Geometry S1</td><td class="num">0.5</td><td></td><td></td><td></td><td></td></tr>
            <tr class="r17"><th>11</th><td></td><td>Eng 2 S2</td><td class="num">0.5</td><td>US History S2</td><td class="num">0.5</td><td>Geometry S2</td><td class="num">0.5</td><td></td><td></td><td></td><td></td></tr>
            <tr class="r17"><th>12</th><td></td><td>Eng 3 S1</td><td class="num">0.5</td><td>Government</td><td class="num">0.5</td><td>Algebra 2 S1</td><td class="num">0.5</td><td></td><td></td><td></td><td></td></tr>
            <tr class="r17 thick"><th>13</th><td></td><td class="blue">Eng 3 S2</td><td class="num">0.5</td><td class="blue">Psychology</td><td class="num">0.5</td><td class="sel">Algebra 2 S2</td><td></td><td></td><td></td><td></td><td></td></tr>
            <tr class="r17"><th>14</th><td></td><td></td><td></td><td></td><td></td><td></td><td></td><td></td><td></td><td></td><td></td></tr>
            <tr class="r17"><th>15</th><td></td><td></td><td></td><td></td><td></td><td></td><td></td><td></td><td></td><td></td><td></td></tr>
            <tr class="r17"><th>16</th><td></td><td class="lab num">Total:</td><td class="sum">3</td><td class="lab num">Total:</td><td class="ok">3</td><td class="lab num">Total:</td><td class="sum">2.5</td><td class="lab num">Total:</td><td class="sum">0</td><td class="lab num">Total:</td><td class="sum">0</td></tr>
            <tr class="r21"><th>17</th><td></td><td class="lab num">Still Need</td><td class="need">1</td><td class="lab num">Still Need</td><td class="need">0</td><td class="lab num">Still Need</td><td class="need">0.5</td><td class="lab num">Still Need</td><td class="need">3</td><td class="lab num">Still Need</td><td class="need">1</td></tr>
            <tr class="r17"><th>18</th><td></td><td></td><td></td><td></td><td></td><td></td><td></td><td></td><td></td><td></td><td></td></tr>
          </table>
          <div class="handle"></div>
        </div>
        <div class="vtrack"><div class="vthumb"></div><div class="vstep up"></div><div class="vstep dn"></div></div>
      </div>

      <!-- sheet tabs -->
      <div class="sheetbar d-flex align-items-center">
        <div class="sheetadd d-flex align-items-center">
          <svg width="11" height="11" viewBox="0 0 11 11"><path d="M5.500 0v11M0 5.500h11" stroke="#555" stroke-width="1.400"/></svg>
          <svg class="ms-2" width="11" height="10" viewBox="0 0 11 10" fill="#555"><path d="M0 0h11v1.300H0zM0 2.900h11v1.300H0zM0 5.800h11v1.300H0zM0 8.700h11V10H0z"/></svg>
        </div>
        <div class="sheettab d-flex align-items-center">Sheet1 <div class="caret"></div></div>
        <div class="explore d-flex align-items-center">
          <svg width="16" height="19" viewBox="0 0 16 19"><path d="M2 0h12a2 2 0 012 2v13a2 2 0 01-2 2h-4l-2 2-2-2H2a2 2 0 01-2-2V2a2 2 0 012-2z" fill="#0f9d58"/><path d="M8 3.500l1.300 3.700L13 8.500l-3.700 1.300L8 13.500 6.700 9.800 3 8.500l3.700-1.300z" fill="#fff"/></svg>
          Explore
        </div>
        <div class="hsteps d-flex">
          <svg width="4" height="6" viewBox="0 0 4 6" fill="#bbb"><path d="M4 0v6L0 3z"/></svg>
          <svg width="4" height="6" viewBox="0 0 4 6" fill="#bbb"><path d="M0 0v6l4-3z"/></svg>
        </div>
      </div>
    </div>

    <!-- side panel -->
    <div class="sidepanel d-flex flex-column align-items-center">
      <div class="sideslot d-flex align-items-center justify-content-center"><svg width="14" height="15" viewBox="0 0 14 15"><rect width="14" height="15" rx="1.500" fill="#4285f4"/><rect x="3" y="3" width="11" height="9" fill="#fff"/><rect x="11" width="3" height="3" fill="#fbbc04"/><rect x="3" y="12" width="8" height="3" fill="#34a853"/><text x="7.500" y="10.500" font-size="6.500" fill="#4285f4" text-anchor="middle" font-family="Liberation Sans">31</text></svg></div>
      <div class="sideslot d-flex align-items-center justify-content-center"><svg width="15" height="15" viewBox="0 0 15 15"><rect width="15" height="15" rx="1.500" fill="#fbc02d"/><circle cx="7.500" cy="6.500" r="3" fill="#fff"/><rect x="6" y="10" width="3" height="1.500" fill="#fff"/></svg></div>
      <div class="sideslot d-flex align-items-center justify-content-center"><svg width="15" height="15" viewBox="0 0 15 15"><circle cx="7.500" cy="7.500" r="5.800" fill="none" stroke="#2b7de9" stroke-width="2.800"/><path d="M5 7.500l2 2 4.500-5" fill="none" stroke="#fff" stroke-width="1.200"/><path d="M5.200 7.300l2 2 6-7" fill="none" stroke="#2b7de9" stroke-width="1.600"/></svg></div>
      <div class="sideslot d-flex align-items-center justify-content-center"><svg width="12" height="15" viewBox="0 0 12 15" fill="#1a73e8"><circle cx="6" cy="3.500" r="3"/><path d="M0 13c0-3 2.500-5 6-5s6 2 6 5v2H0z"/></svg></div>
      <div class="sideslot d-flex align-items-center justify-content-center"><svg width="12" height="16" viewBox="0 0 12 16"><path d="M6 0a6 6 0 016 6c0 4-6 10-6 10S0 10 0 6a6 6 0 016-6z" fill="#34a853"/><path d="M1 2.500A6 6 0 016 0v6H0a6 6 0 011-3.500z" fill="#ea4335"/><path d="M6 0a6 6 0 016 6H6z" fill="#4285f4"/><circle cx="6" cy="6" r="2.200" fill="#fbbc04"/></svg></div>
      <div class="sidediv"></div>
      <div class="sideslot d-flex align-items-center justify-content-center"><svg width="12" height="12" viewBox="0 0 12 12"><path d="M6 0v12M0 6h12" stroke="#333" stroke-width="1.400"/></svg></div>
      <svg class="sidechev" width="7" height="11" viewBox="0 0 7 11" fill="none" stroke="#555" stroke-width="1.300"><path d="M1 1l4.500 4.500L1 10"/></svg>
    </div>
  </div>

  <!-- taskbar -->
  <div class="taskbar d-flex align-items-center flex-shrink-0">
    <div class="winstart d-flex align-items-center justify-content-center"><svg width="14" height="14" viewBox="0 0 14 14" fill="#fff"><path d="M0 2l6-.9v5.400H0zM7 1l7-1v6.500H7zM0 7.500h6v5.400L0 12zM7 7.500h7V14l-7-1z"/></svg></div>
    <div class="searchbox d-flex align-items-center">
      <svg class="ic" width="16" height="16" viewBox="0 0 24 24"><g transform="matrix(-1 0 0 1 24 0)"><path d="M15.500 14h-.79l-.28-.27C15.410 12.590 16 11.110 16 9.500 16 5.910 13.090 3 9.500 3S3 5.910 3 9.500 5.910 16 9.500 16c1.610 0 3.090-.59 4.230-1.570l.27.28v.79l5 4.990L20.490 19l-4.990-5zm-6 0C7.010 14 5 11.990 5 9.500S7.010 5 9.500 5 14 7.010 14 9.500 11.990 14 9.500 14z"/></g></svg>
      Type here to search
    </div>
    <div class="tk d-flex align-items-center justify-content-center"><svg width="14" height="14" viewBox="0 0 14 14" fill="none" stroke="#ddd"><path d="M1 1h8M1 13h8M2 4h6v6H2zM12 1v12"/></svg></div>
    <div class="tk on run d-flex align-items-center justify-content-center"><svg width="20" height="20" viewBox="0 0 20 20"><circle cx="10" cy="10" r="9" fill="#ea4335"/><path d="M10 10L2.200 5.500A9 9 0 002 14.500 9 9 0 0010 19z" fill="#34a853"/><path d="M10 10l7.800 4.500A9 9 0 0110 19z" fill="#fbbc04"/><circle cx="10" cy="10" r="4" fill="#4285f4" stroke="#fff"/><circle cx="15" cy="15" r="4.500" fill="#8a857c"/></svg></div>
    <div class="tk run d-flex align-items-center justify-content-center"><svg width="18" height="15" viewBox="0 0 18 15"><path d="M0 1h7l2 2h9v11H0z" fill="#f6c343"/><rect y="6" width="18" height="9" fill="#ffdd75"/><rect x="6" y="9" width="6" height="3" fill="#3d8fd1"/></svg></div>
    <div class="tk run d-flex align-items-center justify-content-center"><svg width="15" height="18" viewBox="0 0 15 18"><rect width="15" height="18" rx="2" fill="#5a9bd5"/><circle cx="7.500" cy="9" r="5" fill="#fff"/><path d="M6 6l4 3-4 3z" fill="#f08a24"/></svg></div>
    <div class="tk run d-flex align-items-center justify-content-center"><svg width="18" height="20" viewBox="0 0 18 20"><rect width="18" height="20" fill="#e6f2e8"/><rect y="14" width="18" height="6" fill="#47b265"/><circle cx="9" cy="7" r="3.500" fill="none" stroke="#47b265" stroke-width="1.500"/><text x="9" y="18.500" font-size="4" fill="#fff" text-anchor="middle" font-family="Liberation Sans">PLEX</text></svg></div>
    <div class="tk run d-flex align-items-center justify-content-center"><svg class="ic" width="18" height="18" viewBox="0 0 24 24"><use href="#m-gear"/></svg></div>
    <div class="tk run d-flex align-items-center justify-content-center"><svg width="18" height="20" viewBox="0 0 18 20"><rect width="18" height="20" rx="2" fill="#b3191f"/><circle cx="10" cy="10" r="4.500" fill="none" stroke="#fff" stroke-width="1.500"/><path d="M3 7v6M5.500 6v8" stroke="#fff"/></svg></div>
    <div class="d-flex align-items-center ms-auto">
      <div class="tray d-flex align-items-center">
        <svg width="12" height="7" viewBox="0 0 12 7" fill="none" stroke="#ddd"><path d="M1 6l5-5 5 5"/></svg>
        <svg class="ms-1" width="8" height="14" viewBox="0 0 8 14" fill="#ddd"><rect x="1" width="6" height="10" rx="3"/><path d="M3.300 10h1.400v3H3.300zM1 13h6v1H1z"/></svg>
        <svg class="ms-1" width="13" height="10" viewBox="0 0 13 10" fill="#ccc"><path d="M0 2h4l1-2h8v10H0z"/></svg>
        <svg class="ms-1" width="14" height="13" viewBox="0 0 14 13" fill="none" stroke="#ddd"><path d="M3.500.5h10v8h-10zM7 8.500v4M4 12.500h6M.5 2.500h3v5h-3z"/></svg>
        <svg width="13" height="12" viewBox="0 0 13 12" fill="none" stroke="#aaa"><path d="M1 4h2l3-3v10L3 8H1zM8 4c1 1 1 3 0 4M10 2.500c2 2 2 5 0 7"/></svg>
      </div>
      <div class="clock">11:02 AM<br>1/12/2023</div>
      <svg class="notif" width="16" height="17" viewBox="0 0 16 17"><path d="M0 0h13v10H0z" fill="#ddd"/><path d="M2 2.500h9M2 5h9M2 7.500h6" stroke="#333"/><circle cx="11" cy="11.500" r="5" fill="#222" stroke="#ddd"/><text x="11" y="14.500" font-size="8" fill="#fff" text-anchor="middle" font-family="Liberation Sans">1</text></svg>
    </div>
  </div>

  <!-- text colour menu -->
  <div class="colormenu">
    <div class="reset d-flex align-items-center">
      <svg class="ic" width="15" height="15" viewBox="0 0 24 24"><path d="M18 14c0-4-6-10.800-6-10.800s-1.330 1.510-2.680 3.480l8.600 8.600c.05-.41.08-.83.080-1.280zM5.410 3.970L4 5.380l3.320 3.320C6.550 10.230 6 11.960 6 14c0 3.310 2.690 6 6 6 1.520 0 2.900-.57 3.960-1.500l2.630 2.630L20 19.720 5.410 3.970z"/></svg>
      <span>Reset</span>
    </div>
    <div class="swatches" id="themeSwatches"></div>
    <div class="cap cap-std d-flex align-items-center">STANDARD
      <svg class="ic" width="11" height="11" viewBox="0 0 24 24"><path d="M3 17.250V21h3.750L17.810 9.940l-3.750-3.750L3 17.250zM20.710 7.040c.39-.39.39-1.020 0-1.410l-2.340-2.340c-.39-.39-1.020-.39-1.410 0l-1.830 1.830 3.750 3.750 1.830-1.830z"/></svg>
    </div>
    <div class="swatches" id="standardSwatches"></div>
    <div class="menurule mt-2"></div>
    <div class="cap cap-cus">CUSTOM</div>
    <div class="swatches" id="customSwatches"></div>
    <div class="menurule mt-2"></div>
    <div class="cfmt">Conditional formatting</div>
  </div>

  <svg class="handcur" width="13" height="17" viewBox="0 0 13 17"><path d="M3.500 1.500c.8 0 1.300.6 1.300 1.300V8l1-.3V6.500c.8-.4 1.500 0 1.500.7l.1.600c.7-.4 1.400 0 1.500.7.700-.3 1.400 0 1.500.8l.1 3.500c0 1.700-1 3.300-2.500 3.300H6c-1 0-1.600-.6-2.200-1.500L1 10.500c-.4-.8.400-1.500 1.200-1l.9.900V2.800c0-.7-.3-1.300.4-1.300z" fill="#fff" stroke="#222" stroke-width=".8"/></svg>
</div>

<script>
  // colour menu swatches, rows as in the Sheets palette
  const theme = [
    ['#000','#434343','#666','#999','#b7b7b7','#d2d2d2','#e3e3e3','#fff','#fff','#fff'],
    ['#980000','#f00','#f90','#ff0','#0f0','#0ff','#4a86e8','#00f','#90f','#f0f'],
    ['#eab9b4','#f6d0d3','#fdf3e3','#fff9e3','#e6f3e1','#dbe9eb','#d5e3fa','#dbeaf6','#e3dcf1','#f1dde6'],
    ['#dd7e6b','#ea9999','#f9cb9c','#ffe599','#b6d7a8','#a2c4c9','#a4c2f4','#9fc5e8','#b4a7d6','#d5a6bd'],
    ['#cc4125','#e06666','#f6b26b','#ffd966','#93c47d','#76a5af','#6d9eeb','#6fa8dc','#8e7cc3','#c27ba0'],
    ['#a61c00','#c00','#e69138','#f1c232','#6aa84f','#45818e','#3c78d8','#3d85c6','#674ea7','#a64d79'],
    ['#85200c','#900','#b45f06','#bf9000','#38761d','#134f5c','#1155cc','#0b5394','#351c75','#741b47'],
    ['#5b0f00','#600','#783f04','#7f6000','#274e13','#0c343d','#1c4587','#073763','#20124d','#4c1130']
  ];
  const standard = ['#000','#fff','#4285f4','#e8303c','#fbbc04','#34b35a','#ff6d01','#46cdc6'];
  const custom = ['#333','#f8cdd0','#bfeed6'];

  function addDots(boxId, colours) {
    const box = document.getElementById(boxId);
    colours.forEach(c => {
      const dot = document.createElement('div');
      dot.className = 'dot';
      dot.style.background = c;
      box.appendChild(dot);
    });
    return box;
  }

  const themeBox = addDots('themeSwatches', theme.flat());
  themeBox.firstChild.classList.add('dotcheck', 'd-flex', 'align-items-center', 'justify-content-center');
  themeBox.firstChild.innerHTML = '<svg width="10" height="8" viewBox="0 0 10 8" fill="none" stroke="#fff" stroke-width="1.300"><path d="M1 4l3 3 5-6"/></svg>';
  addDots('standardSwatches', standard);
  const customBox = addDots('customSwatches', custom);
  const plus = document.createElement('div');
  plus.className = 'dot d-flex align-items-center justify-content-center';
  plus.innerHTML = '<svg width="13" height="13" viewBox="0 0 13 13" fill="none" stroke="#666"><circle cx="6.500" cy="6.500" r="5.800"/><path d="M6.500 3.500v6M3.500 6.500h6"/></svg>';
  customBox.appendChild(plus);
</script>
<script src="https://cdn.jsdelivr.net/npm/bootstrap@5.3.2/dist/js/bootstrap.bundle.min.js"></script>
</body>
</html>
